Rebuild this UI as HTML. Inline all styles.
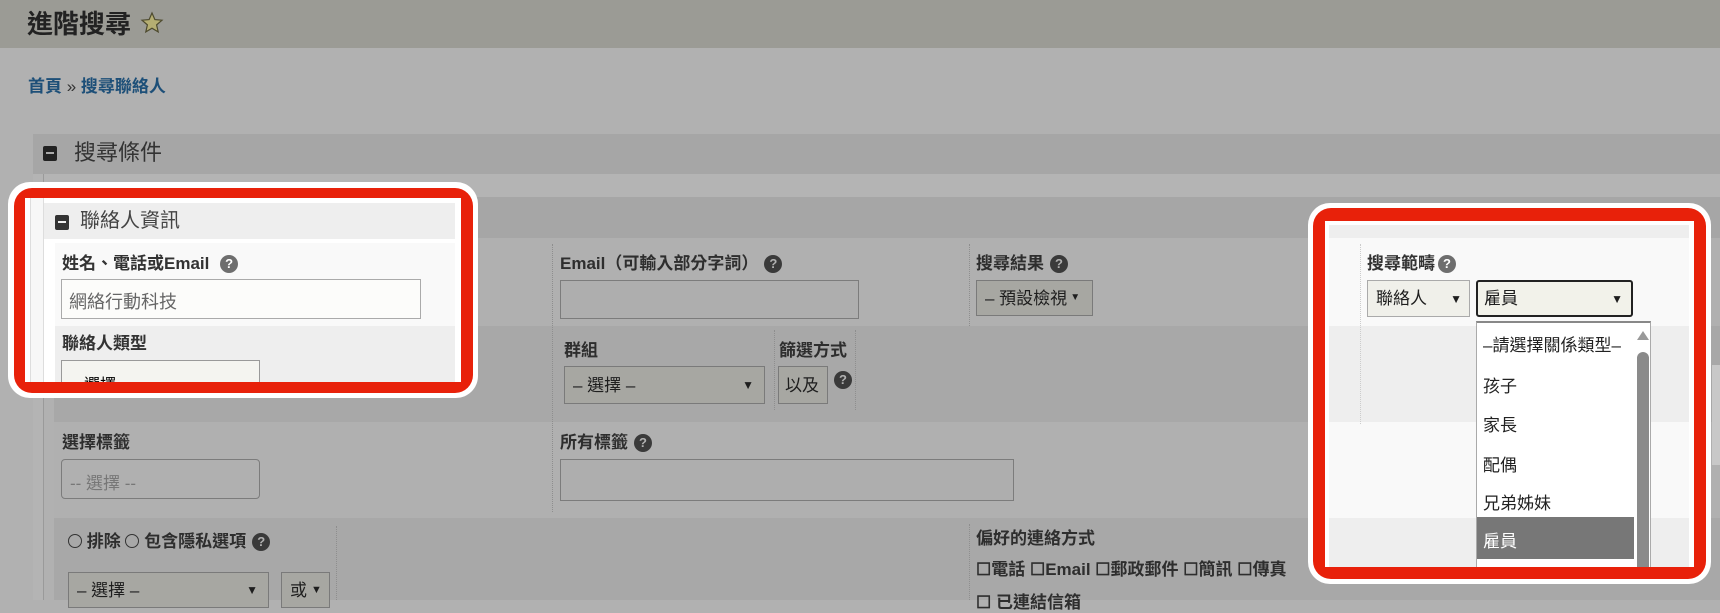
<!DOCTYPE html>
<html><head><meta charset="utf-8">
<style>
*{margin:0;padding:0;box-sizing:border-box}
body{width:1720px;height:600px;overflow:hidden;background:#b1b1b1;font-family:"Liberation Sans","Noto Sans CJK TC",sans-serif;position:relative}
.a{position:absolute}
.lbl{position:absolute;font-size:17px;font-weight:bold;color:#2e2e2e;white-space:nowrap;line-height:20px}
.q{display:inline-block;width:18px;height:18px;border-radius:50%;background:#3a3a3a;color:#b0b0b0;font-size:13px;text-align:center;line-height:18px;vertical-align:1px;margin-left:6px;font-weight:bold}
.ql{background:#6e6e6e;color:#fff}
.sel{position:absolute;border:1px solid #7a7a7a;background:#a7a7a2;font-size:17px;color:#1e1e1e;line-height:1;display:flex;align-items:center;padding-left:8px;white-space:nowrap}
.dv{position:absolute;border-left:1px dotted #8e8e8e}
</style></head><body>
<div class="a" style="left:0;top:0;width:1720px;height:48px;background:#9b9b95"></div>
<div class="a" style="left:27px;top:7px;font-size:26px;font-weight:bold;color:#222;line-height:34px">進階搜尋</div>
<svg class="a" style="left:140px;top:11px" width="24" height="24" viewBox="0 0 24 24"><path d="M12 2l2.9 6.6 7.1.6-5.4 4.7 1.6 7-6.2-3.7-6.2 3.7 1.6-7L2 9.2l7.1-.6z" fill="#b5ae72" stroke="#4d4a2e" stroke-width="1.2"/></svg>
<div class="a" style="left:28px;top:76px;font-size:17px;font-weight:bold;color:#1d4f78;line-height:22px">首頁 <span style="color:#333;font-weight:normal">»</span> 搜尋聯絡人</div>

<div class="a" style="left:33px;top:134px;width:1687px;height:40px;background:#a6a6a6"></div>
<div class="a" style="left:43px;top:146px;width:14px;height:15px;background:#222;border-radius:2px"><div style="margin:6px 3px;height:2px;background:#aaa"></div></div>
<div class="a" style="left:74px;top:140px;font-size:22px;color:#333;line-height:26px">搜尋條件</div>
<div class="a" style="left:33px;top:174px;width:1687px;height:23px;background:#b4b4b4"></div>
<div class="a" style="left:33px;top:174px;width:11px;height:426px;background:#b4b4b4;border-right:1px solid #9a9a9a"></div>
<div class="a" style="left:44px;top:197px;width:1676px;height:41px;background:#a6a6a6"></div>
<div class="a" style="left:54px;top:238px;width:1666px;height:88px;background:#b0b0b0"></div>
<div class="a" style="left:54px;top:326px;width:1666px;height:96px;background:#a8a8a8"></div>
<div class="a" style="left:54px;top:422px;width:1666px;height:96px;background:#b0b0b0"></div>
<div class="a" style="left:54px;top:518px;width:1666px;height:82px;background:#a8a8a8"></div>
<div class="dv" style="left:552px;top:244px;height:268px"></div>
<div class="dv" style="left:969px;top:244px;height:82px"></div>
<div class="dv" style="left:1360px;top:244px;height:180px"></div>
<div class="dv" style="left:774px;top:330px;height:80px"></div>
<div class="dv" style="left:855px;top:330px;height:80px"></div>
<div class="dv" style="left:336px;top:526px;height:74px"></div>
<div class="dv" style="left:969px;top:524px;height:76px"></div>

<div class="lbl" style="left:560px;top:254px">Email（可輸入部分字詞）<span class="q">?</span></div>
<div class="a" style="left:560px;top:280px;width:299px;height:39px;border:1px solid #7c7c7c;background:#aeaeae"></div>
<div class="lbl" style="left:976px;top:254px">搜尋結果<span class="q">?</span></div>
<div class="sel" style="left:976px;top:280px;width:117px;height:36px">– 預設檢視 <span style="font-size:10px;margin-left:3px">▼</span></div>
<div class="lbl" style="left:564px;top:341px">群組</div>
<div class="sel" style="left:564px;top:366px;width:201px;height:38px">– 選擇 –<span style="position:absolute;right:10px;font-size:12px">▼</span></div>
<div class="lbl" style="left:779px;top:341px">篩選方式</div>
<div class="sel" style="left:778px;top:366px;width:50px;height:38px;padding-left:6px">以及</div>
<span class="q a" style="left:828px;top:371px">?</span>
<div class="lbl" style="left:62px;top:433px">選擇標籤</div>
<div class="a" style="left:61px;top:459px;width:199px;height:40px;border:1px solid #7c7c7c;border-radius:4px;font-size:17px;color:#777;padding:9px 0 0 8px">-- 選擇 --</div>
<div class="lbl" style="left:560px;top:433px">所有標籤<span class="q">?</span></div>
<div class="a" style="left:560px;top:459px;width:454px;height:42px;border:1px solid #7c7c7c;background:#aeaeae"></div>
<div class="lbl" style="left:68px;top:532px"><span style="display:inline-block;width:14px;height:14px;border:1px solid #333;border-radius:50%;vertical-align:-1px"></span> 排除 <span style="display:inline-block;width:14px;height:14px;border:1px solid #333;border-radius:50%;vertical-align:-1px"></span> 包含隱私選項<span class="q">?</span></div>
<div class="sel" style="left:68px;top:572px;width:201px;height:36px">– 選擇 –<span style="position:absolute;right:10px;font-size:12px">▼</span></div>
<div class="sel" style="left:281px;top:572px;width:49px;height:36px">或 <span style="font-size:11px;margin-left:4px">▼</span></div>
<div class="lbl" style="left:976px;top:529px">偏好的連絡方式</div>
<div class="a" style="left:976px;top:555px;font-size:17px;font-weight:bold;color:#2e2e2e;white-space:nowrap">☐電話 ☐Email ☐郵政郵件 ☐簡訊 ☐傳真</div>
<div class="a" style="left:976px;top:588px;font-size:17px;font-weight:bold;color:#2e2e2e;white-space:nowrap">☐ 已連結信箱</div>
<div class="a" style="left:1712px;top:365px;width:8px;height:100px;background:#c8c8c8"></div>

<div class="a" style="left:8px;top:182px;width:470px;height:216px;background:#fff;border-radius:22px"></div>
<div class="a" style="left:14px;top:188px;width:459px;height:205px;background:#e8210a;border-radius:18px"></div>
<div class="a" style="left:25px;top:198px;width:436px;height:184px;background:#fff;overflow:hidden">
  <div class="a" style="left:5px;top:0;width:14px;height:184px;border-left:1px solid #ddd;border-right:1px solid #ddd;background:#f7f7f7"></div>
  <div class="a" style="left:19px;top:5px;width:411px;height:36px;background:#eee"></div>
  <div class="a" style="left:30px;top:17px;width:14px;height:15px;background:#333;border-radius:2px"><div style="margin:6px 3px;height:2px;background:#eee"></div></div>
  <div class="a" style="left:55px;top:11px;font-size:20px;color:#444;line-height:24px">聯絡人資訊</div>
  <div class="a" style="left:30px;top:45px;width:400px;height:83px;background:#f9f9f9"></div>
  <div class="a" style="left:30px;top:128px;width:400px;height:60px;background:#eee"></div>
  <div class="lbl" style="left:37px;top:56px;color:#333">姓名、電話或Email <span class="q ql">?</span></div>
  <div class="a" style="left:36px;top:81px;width:360px;height:40px;border:1px solid #aaa;background:#fcfcfa;font-size:18px;color:#666;padding:8px 0 0 7px">網絡行動科技</div>
  <div class="lbl" style="left:37px;top:136px;color:#333">聯絡人類型</div>
  <div class="a" style="left:36px;top:162px;width:199px;height:40px;border:1px solid #999;background:#f4f4f0;font-size:16px;padding:10px 0 0 22px">選擇</div>
</div>

<div class="a" style="left:1308px;top:203px;width:403px;height:381px;background:#fff;border-radius:22px"></div>
<div class="a" style="left:1313px;top:208px;width:393px;height:371px;background:#e8210a;border-radius:18px"></div>
<div class="a" style="left:1325px;top:221px;width:369px;height:346px;background:#fff;overflow:hidden">
  <div class="a" style="left:4px;top:4px;width:360px;height:14px;background:#eee"></div>
  <div class="a" style="left:4px;top:17px;width:360px;height:88px;background:#f9f9f9"></div>
  <div class="a" style="left:4px;top:105px;width:360px;height:96px;background:#eee"></div>
  <div class="a" style="left:4px;top:201px;width:360px;height:96px;background:#f9f9f9"></div>
  <div class="a" style="left:4px;top:297px;width:360px;height:90px;background:#eee"></div>
  <div class="dv" style="left:35px;top:23px;height:180px;border-color:#ccc"></div>
  <div class="lbl" style="left:42px;top:33px;color:#333">搜尋範疇<span class="q ql" style="margin-left:3px">?</span></div>
  <div class="sel" style="left:42px;top:59px;width:103px;height:37px;background:#f0f0ea;border-color:#aaa;font-size:17px">聯絡人<span style="position:absolute;right:7px;font-size:12px">▼</span></div>
  <div class="sel" style="left:151px;top:59px;width:157px;height:37px;background:#f2f2ea;border:2px solid #222;border-radius:3px;font-size:17px;padding-left:6px">雇員<span style="position:absolute;right:8px;font-size:12px">▼</span></div>
  <div class="a" style="left:151px;top:100px;width:175px;height:290px;background:#fff;border:1px solid #aaa;border-top:2px solid #888;font-size:17px;color:#222">
    <div style="position:absolute;left:6px;top:8px;white-space:nowrap">–請選擇關係類型–</div>
    <div style="position:absolute;left:6px;top:49px">孩子</div>
    <div style="position:absolute;left:6px;top:88px">家長</div>
    <div style="position:absolute;left:6px;top:128px">配偶</div>
    <div style="position:absolute;left:6px;top:166px">兄弟姊妹</div>
    <div style="position:absolute;left:0;top:194px;width:157px;height:42px;background:#777;color:#fff;padding:10px 0 0 6px">雇員</div>
    <div style="position:absolute;left:160px;top:8px;width:0;height:0;border-left:6px solid transparent;border-right:6px solid transparent;border-bottom:9px solid #999"></div>
    <div style="position:absolute;left:160px;top:29px;width:12px;height:260px;background:#8a8a8a;border-radius:6px 6px 0 0"></div>
  </div>
</div>
</body></html>
